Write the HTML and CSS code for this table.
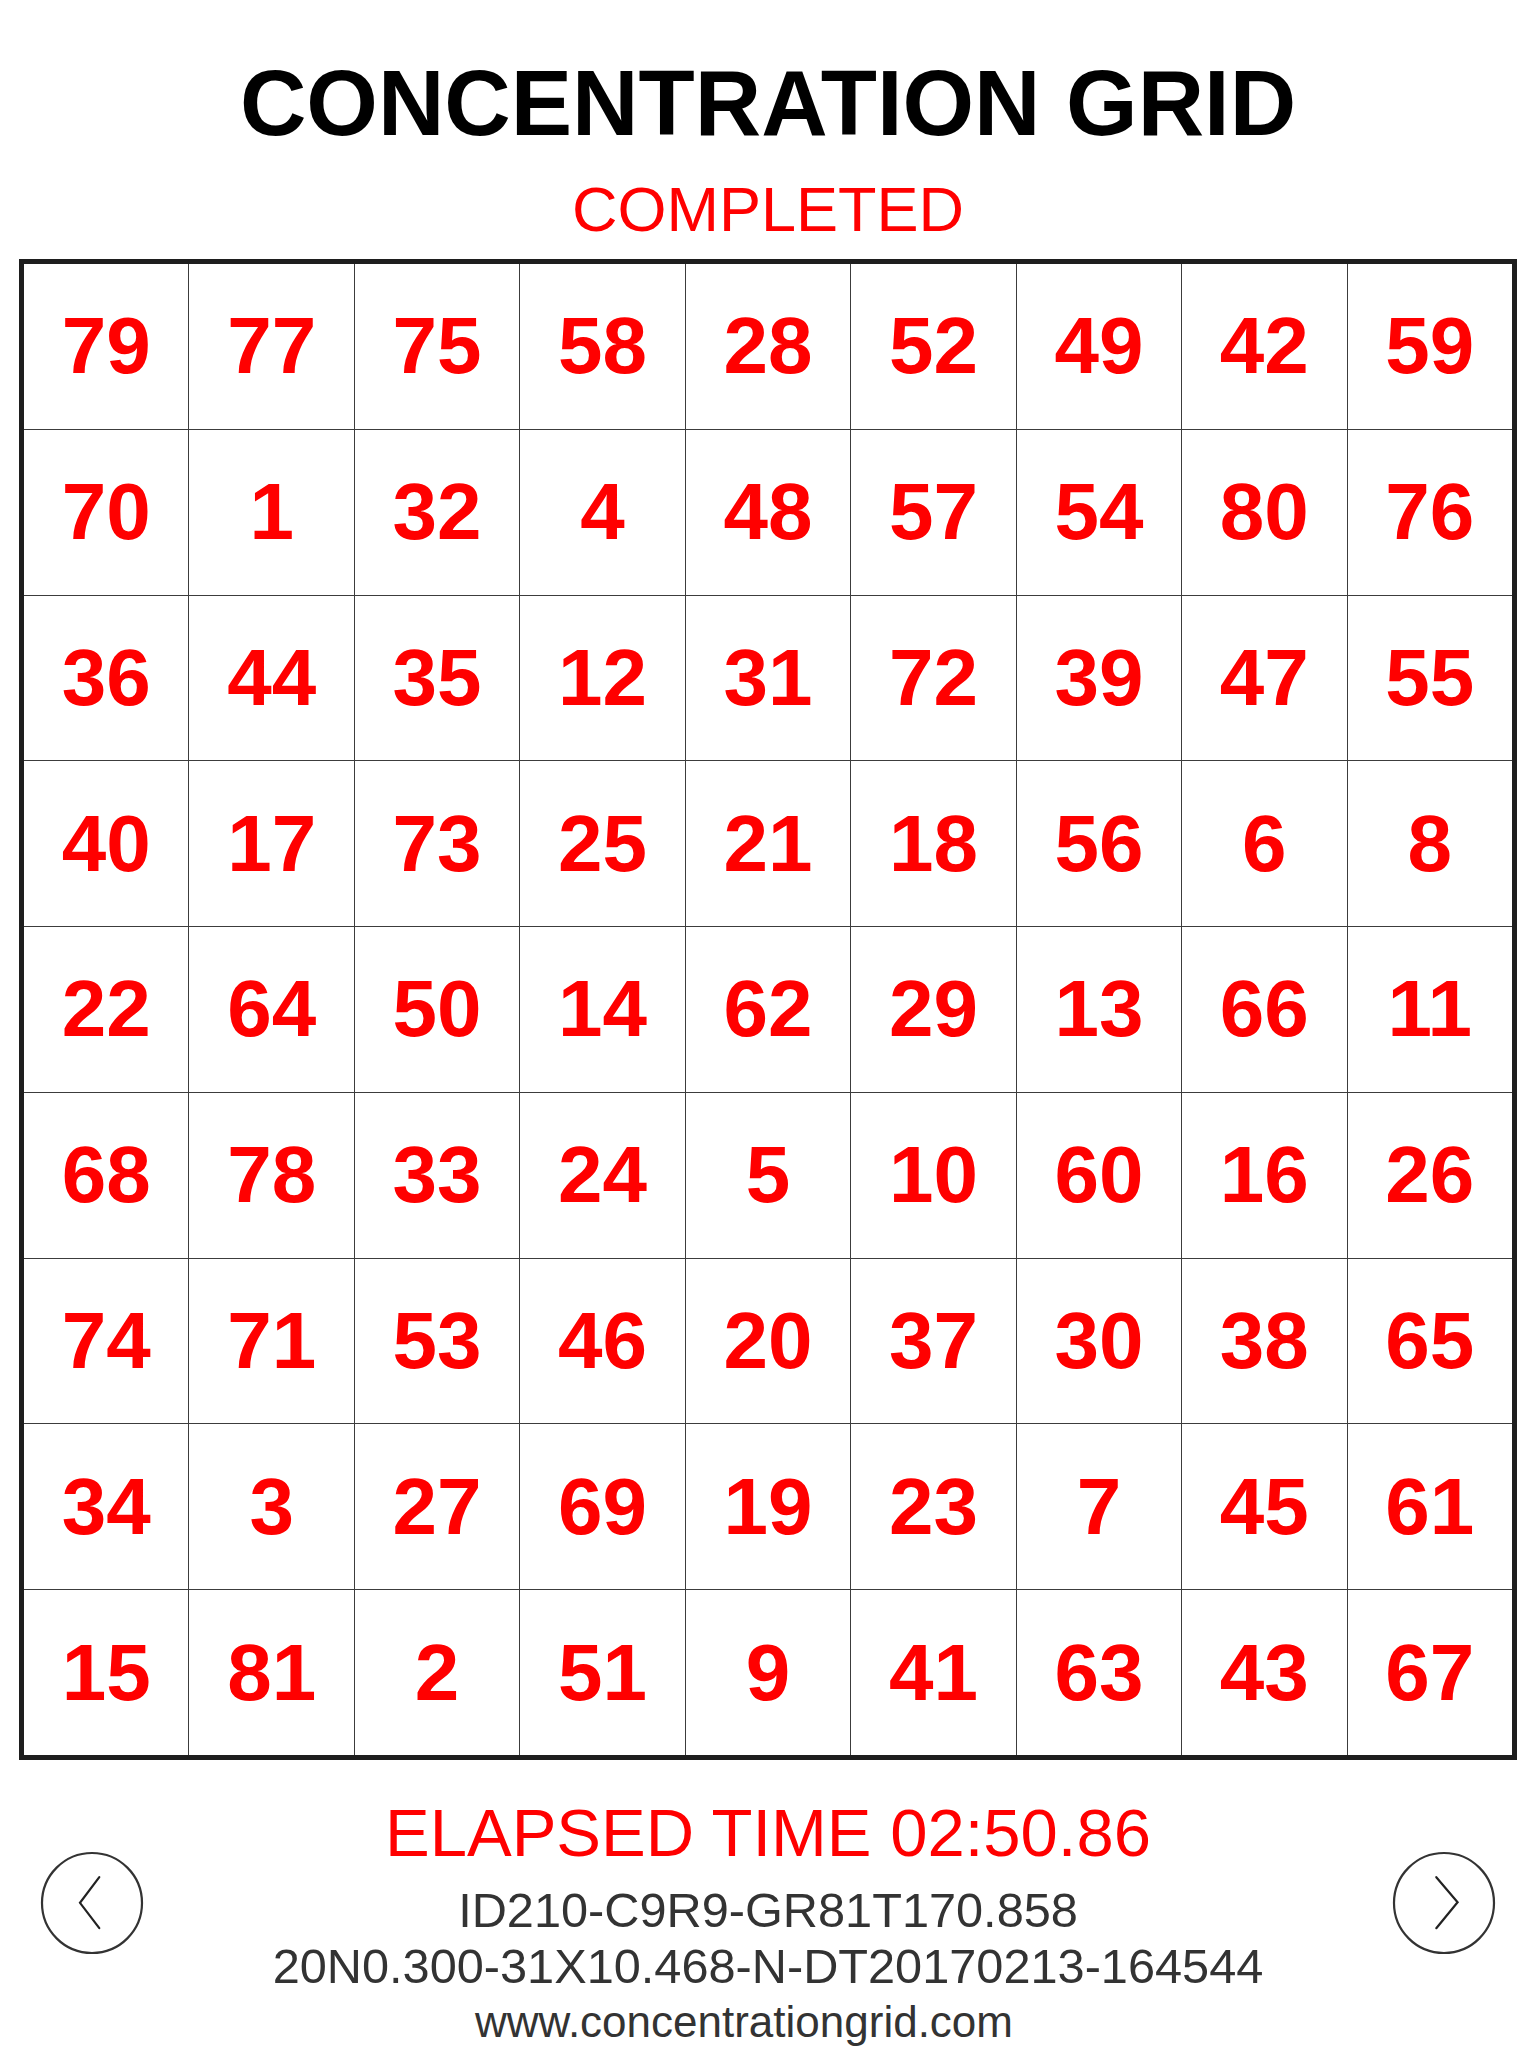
FILE: index.html
```html
<!DOCTYPE html>
<html>
<head>
<meta charset="utf-8">
<title>Concentration Grid</title>
<link rel="stylesheet" href="styles.css">
</head>
<body>
<header class="head">
  <h1 class="title">CONCENTRATION GRID</h1>
  <div class="status">COMPLETED</div>
</header>
<main class="grid">
  <div class="cell">79</div><div class="cell">77</div><div class="cell">75</div><div class="cell">58</div><div class="cell">28</div><div class="cell">52</div><div class="cell">49</div><div class="cell">42</div><div class="cell">59</div>
  <div class="cell">70</div><div class="cell">1</div><div class="cell">32</div><div class="cell">4</div><div class="cell">48</div><div class="cell">57</div><div class="cell">54</div><div class="cell">80</div><div class="cell">76</div>
  <div class="cell">36</div><div class="cell">44</div><div class="cell">35</div><div class="cell">12</div><div class="cell">31</div><div class="cell">72</div><div class="cell">39</div><div class="cell">47</div><div class="cell">55</div>
  <div class="cell">40</div><div class="cell">17</div><div class="cell">73</div><div class="cell">25</div><div class="cell">21</div><div class="cell">18</div><div class="cell">56</div><div class="cell">6</div><div class="cell">8</div>
  <div class="cell">22</div><div class="cell">64</div><div class="cell">50</div><div class="cell">14</div><div class="cell">62</div><div class="cell">29</div><div class="cell">13</div><div class="cell">66</div><div class="cell">11</div>
  <div class="cell">68</div><div class="cell">78</div><div class="cell">33</div><div class="cell">24</div><div class="cell">5</div><div class="cell">10</div><div class="cell">60</div><div class="cell">16</div><div class="cell">26</div>
  <div class="cell">74</div><div class="cell">71</div><div class="cell">53</div><div class="cell">46</div><div class="cell">20</div><div class="cell">37</div><div class="cell">30</div><div class="cell">38</div><div class="cell">65</div>
  <div class="cell">34</div><div class="cell">3</div><div class="cell">27</div><div class="cell">69</div><div class="cell">19</div><div class="cell">23</div><div class="cell">7</div><div class="cell">45</div><div class="cell">61</div>
  <div class="cell">15</div><div class="cell">81</div><div class="cell">2</div><div class="cell">51</div><div class="cell">9</div><div class="cell">41</div><div class="cell">63</div><div class="cell">43</div><div class="cell">67</div>
</main>
<footer class="foot">
  <button class="nav" aria-label="Previous">
    <svg width="104" height="104" viewBox="0 0 104 104"><circle cx="52" cy="52" r="50" fill="none" stroke="#333" stroke-width="2.2"/><polyline points="59.3,26.2 40,51.8 59.3,77.2" fill="none" stroke="#222" stroke-width="2.2" stroke-linecap="round" stroke-linejoin="miter"/></svg>
  </button>
  <div class="info">
    <div class="elapsed">ELAPSED TIME 02:50.86</div>
    <div class="meta first">ID210-C9R9-GR81T170.858</div>
    <div class="meta">20N0.300-31X10.468-N-DT20170213-164544</div>
    <div class="url">www.concentrationgrid.com</div>
  </div>
  <button class="nav" aria-label="Next">
    <svg width="104" height="104" viewBox="0 0 104 104"><circle cx="52" cy="52" r="50" fill="none" stroke="#333" stroke-width="2.2"/><polyline points="44.3,26.2 65.6,51.2 44.3,77.2" fill="none" stroke="#222" stroke-width="2.2" stroke-linecap="round" stroke-linejoin="miter"/></svg>
  </button>
</footer>
</body>
</html>
```

FILE: styles.css
```css
* { box-sizing: border-box; }
html, body { margin: 0; padding: 0; background: #fff; }
body { font-family: "Liberation Sans", Arial, sans-serif; color: #000; }

.head { text-align: center; padding-top: 57px; }
.title {
  margin: 0;
  font-size: 92px;
  line-height: 92px;
  font-weight: bold;
  color: #000;
}
.status {
  margin-top: 29px;
  font-size: 63px;
  line-height: 63px;
  color: #ff0000;
}

.grid {
  width: 1498px;
  height: 1501px;
  margin: 18px auto 0;
  border: 5px solid #1e1e1e;
  background: #3c3c3c;
  display: grid;
  grid-template-columns: repeat(9, 1fr);
  grid-template-rows: repeat(9, 1fr);
  gap: 1px;
}
.cell {
  background: #fff;
  display: flex;
  align-items: center;
  justify-content: center;
  font-size: 80px;
  line-height: 1;
  font-weight: bold;
  color: #ff0000;
}

.foot {
  display: flex;
  justify-content: space-between;
  align-items: flex-start;
  padding: 0 40px;
  margin-top: 39px;
}
.nav {
  margin: 52px 0 0;
  padding: 0;
  border: 0;
  background: none;
  width: 104px;
  height: 104px;
  flex: none;
}
.nav svg { display: block; }
.info { flex: 1; text-align: center; }
.elapsed {
  font-size: 67px;
  line-height: 68px;
  color: #ff0000;
}
.meta {
  font-size: 48.7px;
  line-height: 56px;
  color: #333;
}
.meta.first { margin-top: 15px; }
.url {
  font-size: 44px;
  line-height: 55px;
  color: #333;
  margin-right: 48px;
}
```
